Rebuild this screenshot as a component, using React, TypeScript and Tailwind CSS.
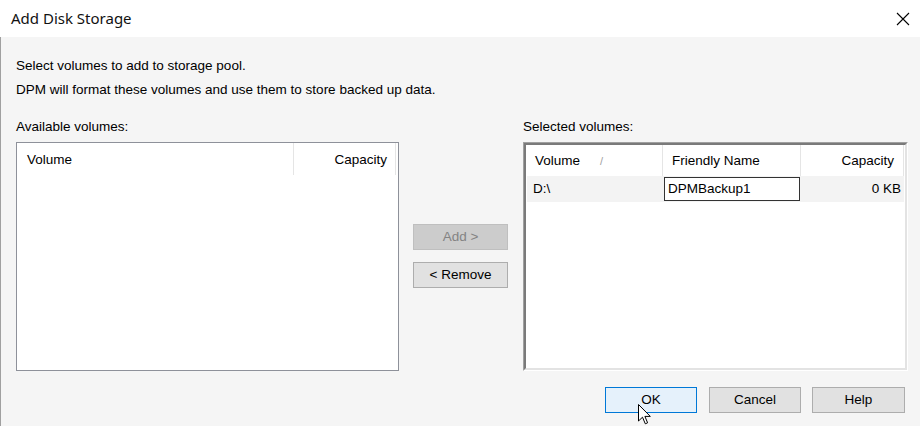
import React from 'react';

function CloseIcon() {
  return (
    <svg width="14" height="14" viewBox="0 0 14 14" className="text-black">
      <path d="M1 1 L13 13 M13 1 L1 13" stroke="currentColor" strokeWidth="1.1" fill="none" />
    </svg>
  );
}

function Cursor() {
  return (
    <svg
      width="14"
      height="22"
      viewBox="0 0 14 22"
      className="absolute left-[638px] top-[404px]"
    >
      <path
        d="M0.5 0.5 L0.5 17 L4.5 13.2 L7.3 19.8 L9.6 18.8 L6.9 12.4 L12.3 12.4 Z"
        fill="#ffffff"
        stroke="#000000"
        strokeWidth="1"
        strokeLinejoin="round"
      />
    </svg>
  );
}

function Button({
  label,
  className,
  disabled,
}: {
  label: string;
  className: string;
  disabled?: boolean;
}) {
  return (
    <div
      className={`h-[26px] flex items-center justify-center border ${
        disabled ? 'bg-[#cccccc] border-[#bfbfbf] text-[#838383]' : 'bg-[#e1e1e1] border-[#adadad] text-black'
      } ${className}`}
    >
      {label}
    </div>
  );
}

export default function App() {
  return (
    <div className="w-[920px] h-[426px] overflow-hidden relative font-['Liberation_Sans',Arial,sans-serif] text-black">
      {/* Title bar */}
      <div className="h-[37px] bg-white flex items-center justify-between pl-[11px] pr-[10px]">
        <span className="text-[15px] font-['Noto_Sans',sans-serif] text-[#111]">Add Disk Storage</span>
        <CloseIcon />
      </div>

      {/* Body */}
      <div className="h-[389px] bg-[#f5f5f5] border-l border-[#a0a0a0] pl-[15px] pt-[17px] text-[13.5px]">
        <p className="leading-[24px]">Select volumes to add to storage pool.</p>
        <p className="leading-[24px]">DPM will format these volumes and use them to store backed up data.</p>

        <div className="flex mt-[17px]">
          {/* Available */}
          <div className="w-[383px] flex flex-col">
            <div className="leading-[16px]">Available volumes:</div>
            <div className="mt-[7px] h-[229px] bg-white border border-[#8e919a]">
              <div className="h-[32px] flex">
                <div className="w-[277px] pl-[10px] pt-[2px] flex items-center border-r border-[#e5e5e5]">Volume</div>
                <div className="w-[102px] pr-[8px] pt-[2px] flex items-center justify-end border-r border-[#e5e5e5]">Capacity</div>
              </div>
            </div>
          </div>

          {/* Middle buttons */}
          <div className="w-[95px] ml-[14px] pt-[105px] flex flex-col gap-[12px]">
            <Button label="Add >" disabled className="w-[95px]" />
            <Button label="< Remove" className="w-[95px]" />
          </div>

          {/* Selected */}
          <div className="w-[385px] ml-[15px] flex flex-col">
            <div className="leading-[16px]">Selected volumes:</div>
            <div className="mt-[7px] h-[229px] border border-t-[#a0a0a0] border-l-[#a0a0a0] border-r-white border-b-white">
              <div className="h-full bg-white border-2 border-t-[#7a7a7a] border-l-[#7a7a7a] border-r-[#e3e3e3] border-b-[#e3e3e3]">
                <div className="h-[31px] flex">
                  <div className="w-[137px] pl-[9px] pt-[2px] flex items-center border-r border-[#e5e5e5]">
                    Volume
                    <span className="ml-[20px] text-[11px] text-[#a0a0a0]">/</span>
                  </div>
                  <div className="w-[138px] pl-[9px] pt-[2px] flex items-center border-r border-[#e5e5e5]">Friendly Name</div>
                  <div className="w-[103px] pr-[9px] pt-[2px] flex items-center justify-end border-r border-[#e5e5e5]">Capacity</div>
                </div>
                <div className="h-[26px] mx-[1px] flex items-center bg-[#f3f3f3]">
                  <div className="w-[137px] pl-[6px]">D:\</div>
                  <div className="w-[136px] h-[24px] flex items-center pl-[3px] bg-white border border-[#333333]">
                    DPMBackup1
                  </div>
                  <div className="flex-1 pr-[3px] text-right">0 KB</div>
                </div>
              </div>
            </div>
          </div>
        </div>

        {/* Dialog buttons */}
        <div className="flex mt-[16px] pl-[589px]">
          <div className="w-[92px] h-[26px] flex items-center justify-center bg-[#e5f1fb] border border-[#0078d7]">OK</div>
          <Button label="Cancel" className="w-[92px] ml-[12px]" />
          <Button label="Help" className="w-[93px] ml-[11px]" />
        </div>
      </div>

      <Cursor />
    </div>
  );
}
